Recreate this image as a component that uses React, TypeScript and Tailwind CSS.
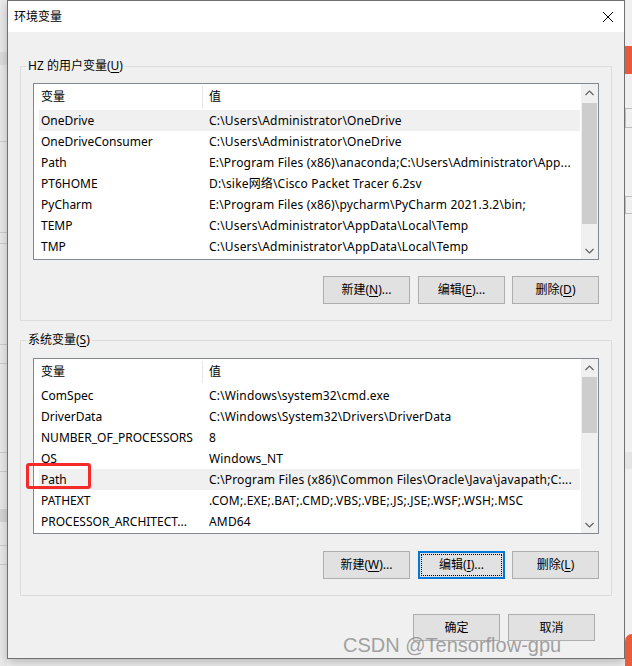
import type { ReactNode } from 'react';

type Row = { name: string; value: string; selected?: boolean };

const USER_VARS: Row[] = [
  { name: 'OneDrive', value: 'C:\\Users\\Administrator\\OneDrive', selected: true },
  { name: 'OneDriveConsumer', value: 'C:\\Users\\Administrator\\OneDrive' },
  { name: 'Path', value: 'E:\\Program Files (x86)\\anaconda;C:\\Users\\Administrator\\App...' },
  { name: 'PT6HOME', value: 'D:\\sike网络\\Cisco Packet Tracer 6.2sv' },
  { name: 'PyCharm', value: 'E:\\Program Files (x86)\\pycharm\\PyCharm 2021.3.2\\bin;' },
  { name: 'TEMP', value: 'C:\\Users\\Administrator\\AppData\\Local\\Temp' },
  { name: 'TMP', value: 'C:\\Users\\Administrator\\AppData\\Local\\Temp' },
];

const SYSTEM_VARS: Row[] = [
  { name: 'ComSpec', value: 'C:\\Windows\\system32\\cmd.exe' },
  { name: 'DriverData', value: 'C:\\Windows\\System32\\Drivers\\DriverData' },
  { name: 'NUMBER_OF_PROCESSORS', value: '8' },
  { name: 'OS', value: 'Windows_NT' },
  { name: 'Path', value: 'C:\\Program Files (x86)\\Common Files\\Oracle\\Java\\javapath;C:...', selected: true },
  { name: 'PATHEXT', value: '.COM;.EXE;.BAT;.CMD;.VBS;.VBE;.JS;.JSE;.WSF;.WSH;.MSC' },
  { name: 'PROCESSOR_ARCHITECT...', value: 'AMD64' },
];

function Chevron({ up }: { up?: boolean }) {
  return (
    <svg width="9" height="6" viewBox="0 0 9 6" aria-hidden>
      <polyline
        points={up ? '0.5,5 4.5,1 8.5,5' : '0.5,1 4.5,5 8.5,1'}
        fill="none"
        stroke="#606060"
        strokeWidth="1.2"
      />
    </svg>
  );
}

function VarList({ rows, height, thumbTop, thumbHeight }: { rows: Row[]; height: string; thumbTop: string; thumbHeight: string }) {
  return (
    <div className={`flex border border-[#828790] bg-white ${height}`}>
      <div className="flex-1 min-w-0 pl-[5px] pr-[1px]">
        <div className="flex h-[26px] items-center">
          <div className="w-[163px] pl-[2px]">变量</div>
          <div className="h-[22px] w-px bg-[#e5e5e5]" />
          <div className="pl-[6px]">值</div>
        </div>
        {rows.map((r) => (
          <div
            key={r.name + r.value}
            className={`flex h-[21px] items-center whitespace-nowrap ${r.selected ? 'bg-[#f0f0f0]' : ''}`}
          >
            <div className="w-[170px] shrink-0 overflow-hidden pl-[2px]">{r.name}</div>
            <div className="min-w-0 overflow-hidden tracking-[0.17px]">{r.value}</div>
          </div>
        ))}
      </div>
      <div className="flex w-[17px] flex-col bg-[#f0f0f0]">
        <div className="flex h-[17px] items-center justify-center">
          <Chevron up />
        </div>
        <div className="relative flex-1">
          <div className={`absolute left-px right-px bg-[#cdcdcd] ${thumbTop} ${thumbHeight}`} />
        </div>
        <div className="flex h-[17px] items-center justify-center">
          <Chevron />
        </div>
      </div>
    </div>
  );
}

function Btn({ children, focused, h = 'h-[28px]' }: { children: ReactNode; focused?: boolean; h?: string }) {
  if (focused) {
    return (
      <div className={`flex w-[87px] ${h} items-center justify-center border-2 border-[#0078d7] bg-[#e1e1e1] p-px`}>
        <div className="flex h-full w-full items-center justify-center border border-dotted border-black">
          {children}
        </div>
      </div>
    );
  }
  return (
    <div className={`flex w-[87px] ${h} items-center justify-center border border-[#adadad] bg-[#e1e1e1]`}>
      {children}
    </div>
  );
}

function Key({ children }: { children: ReactNode }) {
  return <span className="underline underline-offset-2">{children}</span>;
}

function Group({ legend, children, pt }: { legend: ReactNode; children: ReactNode; pt: string }) {
  return (
    <div className={`relative mx-[12px] border border-[#dcdcdc] px-[12px] pb-[16px] ${pt}`}>
      <span className="absolute left-[5px] top-[-9px] bg-[#f0f0f0] px-[2px] leading-[16px]">{legend}</span>
      {children}
    </div>
  );
}

export default function App() {
  return (
    <div className="relative flex h-[666px] w-[632px] overflow-hidden bg-[#f4f4f4] font-['Noto_Sans','Noto_Sans_CJK_SC',sans-serif] text-[12px] text-black">
      {/* background windows, left */}
      <div className="flex h-full w-[7px] shrink-0 flex-col bg-[#ebebeb]">
        <div className="mt-[52px] h-[13px] bg-[#dedede]" />
        <div className="mt-[76px] h-px bg-[#cfcfcf]" />
        <div className="mt-[90px] h-px bg-[#cfcfcf]" />
        <div className="mt-[10px] h-px bg-[#cfcfcf]" />
        <div className="mt-[100px] h-px bg-[#cfcfcf]" />
        <div className="mt-[18px] h-px bg-[#cfcfcf]" />
        <div className="mt-[88px] h-px bg-[#cfcfcf]" />
        <div className="mt-[18px] h-px bg-[#cfcfcf]" />
        <div className="mt-[37px] h-[13px] bg-[#d6d6d6]" />
        <div className="mt-[23px] h-px bg-[#cfcfcf]" />
        <div className="mt-[18px] h-px bg-[#cfcfcf]" />
      </div>

      {/* dialog */}
      <div className="flex h-[659px] w-[618px] shrink-0 flex-col border border-[#707070] bg-[#f0f0f0] shadow-[0_4px_10px_rgba(0,0,0,0.25)]">
        <div className="flex h-[31px] items-center justify-between bg-white pl-[6px] pr-[10px]">
          <span>环境变量</span>
          <svg width="12" height="12" viewBox="0 0 12 12" aria-hidden>
            <path d="M1 1L11 11M11 1L1 11" stroke="#000" strokeWidth="1" />
          </svg>
        </div>

        <div className="flex flex-1 flex-col pt-[34px]">
          <Group
            pt="pt-[16px]"
            legend={
              <>
                HZ 的用户变量(<Key>U</Key>)
              </>
            }
          >
            <VarList rows={USER_VARS} height="h-[177px]" thumbTop="top-[2px]" thumbHeight="h-[121px]" />
            <div className="mt-[16px] flex justify-end gap-[7px]">
              <div className="mr-px">
                <Btn>
                  新建(<Key>N</Key>)...
                </Btn>
              </div>
              <Btn>
                编辑(<Key>E</Key>)...
              </Btn>
              <Btn>
                删除(<Key>D</Key>)
              </Btn>
            </div>
          </Group>

          <div className="h-[19px]" />

          <Group
            pt="pt-[17px]"
            legend={
              <>
                系统变量(<Key>S</Key>)
              </>
            }
          >
            <VarList rows={SYSTEM_VARS} height="h-[176px]" thumbTop="top-[1px]" thumbHeight="h-[56px]" />
            <div className="mt-[17px] flex justify-end gap-[7px]">
              <div className="mr-px">
                <Btn>
                  新建(<Key>W</Key>)...
                </Btn>
              </div>
              <Btn focused>
                编辑(<Key>I</Key>)...
              </Btn>
              <Btn>
                删除(<Key>L</Key>)
              </Btn>
            </div>
          </Group>

          <div className="mt-[18px] flex justify-end gap-[8px] pr-[29px]">
            <Btn h="h-[27px]">确定</Btn>
            <Btn h="h-[27px]">取消</Btn>
          </div>
        </div>
      </div>

      {/* background windows, right */}
      <div className="flex h-full flex-1 flex-col bg-[#f0f0f0]">
        <div className="mt-[46px] h-[28px] bg-[#e8583a]" />
        <div className="mt-[34px] h-[20px] border-y border-l border-[#bdbdbd]" />
        <div className="mt-[68px] h-[18px] border-y border-l border-[#bdbdbd]" />
        <div className="mt-[238px] h-[17px] bg-[#e4e4e4]" />
        <div className="flex-1" />
        <div className="h-[32px] rounded-tl-[12px] bg-[#ec5a3c]" />
      </div>

      {/* red annotation around Path */}
      <div className="absolute left-[26px] top-[463px] h-[26px] w-[65px] rounded-[3px] border-[3px] border-[#f52a2a]" />

      {/* watermark */}
      <div className="absolute left-[343px] top-[633px] font-['Liberation_Sans',sans-serif] text-[20px] leading-[24px] text-[#8a8a8a]/80">
        CSDN @Tensorflow-gpu
      </div>
    </div>
  );
}
